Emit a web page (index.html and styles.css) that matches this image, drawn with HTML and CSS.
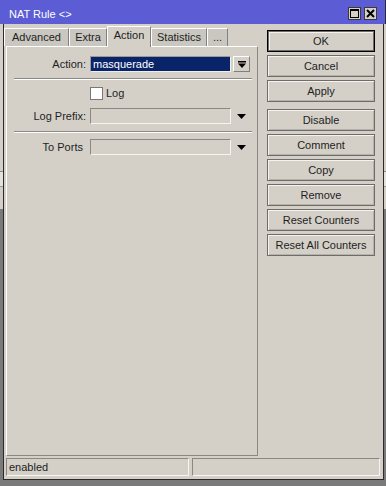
FILE: index.html
```html
<!DOCTYPE html>
<html>
<head>
<meta charset="utf-8">
<link rel="stylesheet" href="styles.css">
</head>
<body>
<div class="window">
  <div class="titlebar">
    <span class="title">NAT Rule &lt;&gt;</span>
    <span class="tbtn"><svg width="11" height="11" viewBox="0 0 11 11"><rect x="1.5" y="1.5" width="8" height="8" fill="none" stroke="#000" stroke-width="1"/><rect x="1" y="1" width="9" height="2" fill="#000"/></svg></span>
    <span class="tbtn"><svg width="11" height="11" viewBox="0 0 11 11"><path d="M2 2 L9 9 M9 2 L2 9" stroke="#000" stroke-width="2"/></svg></span>
  </div>
  <div class="frame">
    <div class="main">
      <div class="left">
        <div class="tabs">
          <div class="tab t-adv">Advanced</div>
          <div class="tab t-extra">Extra</div>
          <div class="tab t-action active">Action</div>
          <div class="tab t-stats">Statistics</div>
          <div class="tab t-more">...</div>
        </div>
        <div class="panel">
          <div class="row r-action">
            <span class="label">Action:</span>
            <div class="field selected">masquerade</div>
            <div class="ddbtn"><svg width="8" height="7" viewBox="0 0 8 7"><rect x="0" y="0" width="8" height="1.5" fill="#000"/><polygon points="0,2.5 8,2.5 4,7" fill="#000"/></svg></div>
          </div>
          <div class="sep s1"></div>
          <div class="row r-log">
            <span class="label"></span>
            <span class="box"></span>
            <span class="cbtext">Log</span>
          </div>
          <div class="row r-prefix">
            <span class="label">Log Prefix:</span>
            <div class="field"></div>
            <div class="arrow"><svg width="9" height="5" viewBox="0 0 9 5"><polygon points="0,0 9,0 4.5,5" fill="#000"/></svg></div>
          </div>
          <div class="sep s2"></div>
          <div class="row r-ports">
            <span class="label">To Ports&nbsp;</span>
            <div class="field"></div>
            <div class="arrow"><svg width="9" height="5" viewBox="0 0 9 5"><polygon points="0,0 9,0 4.5,5" fill="#000"/></svg></div>
          </div>
        </div>
      </div>
      <div class="buttons">
        <div class="btn default">OK</div>
        <div class="btn">Cancel</div>
        <div class="btn">Apply</div>
        <div class="btn gap">Disable</div>
        <div class="btn">Comment</div>
        <div class="btn">Copy</div>
        <div class="btn">Remove</div>
        <div class="btn">Reset Counters</div>
        <div class="btn">Reset All Counters</div>
      </div>
    </div>
    <div class="status">
      <div class="sfield sf1">enabled</div>
      <div class="sfield sf2"></div>
    </div>
  </div>
</div>
</body>
</html>
```
FILE: styles.css
```css
* { box-sizing: border-box; }
html, body { margin: 0; padding: 0; }
body {
  width: 386px;
  height: 486px;
  overflow: hidden;
  font-family: "Liberation Sans", Arial, sans-serif;
  font-size: 11px;
  color: #1e1e1e;
  background: linear-gradient(to bottom,
    #d4d0c8 0, #d4d0c8 171px,
    #8a8a8a 171px, #8a8a8a 172px,
    #e4e2dc 172px, #e4e2dc 186px,
    #9a9a9a 186px, #9a9a9a 187px,
    #d4d0c8 187px, #d4d0c8 209px,
    #7a7a7a 209px);
}
.window {
  display: flex;
  flex-direction: column;
  width: 386px;
  height: 480px;
}
.titlebar {
  height: 24px;
  flex: none;
  background: #5c5cd5;
  display: flex;
  align-items: flex-start;
  padding: 0 8px 0 9px;
  color: #fff;
  border-right: 1px solid #2b2b2b;
}
.title {
  flex: 1;
  line-height: 13px;
  margin-top: 8px;
}
.tbtn {
  width: 13px;
  height: 13px;
  margin-top: 7px;
  margin-left: 3px;
  background: #d4d0c8;
  border: 1px solid #3a3a3a;
  display: flex;
  align-items: center;
  justify-content: center;
}
.tbtn svg { display: block; }
.frame {
  flex: 1;
  margin: 0 2px 0 3px;
  border: 1px solid #2b2b2b;
  border-top: none;
  background: #d4d0c8;
  display: flex;
  flex-direction: column;
  padding: 2px 0 3px 0;
}
.main {
  display: flex;
  flex: 1;
}
.left {
  margin-left: 2px;
  width: 252px;
  display: flex;
  flex-direction: column;
}
.tabs {
  display: flex;
  align-items: flex-end;
  height: 20px;
  margin-left: -2px;
}
.tab {
  height: 18px;
  line-height: 17px;
  text-align: center;
  border: 1px solid;
  border-bottom: 0;
  border-color: #fff #808080 transparent #fff;
  background: #cac7c0;
  white-space: nowrap;
}
.t-adv { width: 65px; }
.t-extra { width: 38px; }
.t-action { width: 44px; }
.t-stats { width: 56px; }
.t-more { width: 21px; }
.tab.active {
  height: 21px;
  background: #d4d0c8;
  position: relative;
  z-index: 1;
  margin-bottom: -1px;
  padding-bottom: 3px;
}
.panel {
  height: 410px;
  border: 1px solid;
  border-color: #fff #8a8883 #8a8883 #fff;
}
.row {
  display: flex;
  align-items: center;
  height: 16px;
}
.label {
  width: 79px;
  margin-right: 4px;
  text-align: right;
  white-space: nowrap;
  line-height: 13px;
}
.field {
  width: 141px;
  height: 16px;
  border: 1px solid;
  border-color: #8a8883 #f6f5f2 #f6f5f2 #8a8883;
  background: #d4d0c8;
  line-height: 14px;
  padding-left: 2px;
}
.field.selected {
  background: #0a246a;
  color: #fff;
  border-color: #9c9a95 #f0efec #f0efec #9c9a95;
}
.ddbtn {
  margin-left: 2px;
  width: 17px;
  height: 16px;
  border: 1px solid;
  border-color: #fff #808080 #808080 #fff;
  display: flex;
  align-items: center;
  justify-content: center;
}
.ddbtn svg, .arrow svg { display: block; }
.arrow {
  margin-left: 2px;
  width: 17px;
  height: 16px;
  display: flex;
  align-items: center;
  justify-content: center;
}
.r-action { margin-top: 9px; }
.sep {
  height: 2px;
  margin: 0 5px 0 7px;
  border-top: 1px solid #8a8883;
  border-bottom: 1px solid #fff;
}
.s1 { margin-top: 6px; }
.s2 { margin-top: 7px; }
.r-log { margin-top: 7px; height: 13px; }
.box {
  width: 13px;
  height: 13px;
  background: #fff;
  border: 1px solid #7a7874;
}
.cbtext { margin-left: 3px; line-height: 13px; }
.r-prefix { margin-top: 8px; }
.r-ports { margin-top: 6px; }
.buttons {
  margin-left: 9px;
  margin-top: 4px;
  width: 108px;
  display: flex;
  flex-direction: column;
  gap: 3px;
}
.btn {
  height: 22px;
  border: 1px solid #6e6c68;
  box-shadow: inset 1px 1px 0 #f4f3f0, inset -1px -1px 0 #b5b2ab;
  text-align: center;
  line-height: 20px;
  white-space: nowrap;
}
.btn.default {
  border-color: #000;
  box-shadow: inset 0 0 0 1px #6e6c68, inset 2px 2px 0 #f4f3f0;
}
.btn.gap { margin-top: 4px; }
.status {
  display: flex;
  height: 18px;
  margin-top: 2px;
  padding-left: 2px;
}
.sfield {
  height: 18px;
  border: 1px solid;
  border-color: #8a8883 #f6f5f2 #f6f5f2 #8a8883;
  line-height: 16px;
  padding-left: 2px;
}
.sf1 { width: 183px; }
.sf2 { width: 188px; margin-left: 3px; }
```
